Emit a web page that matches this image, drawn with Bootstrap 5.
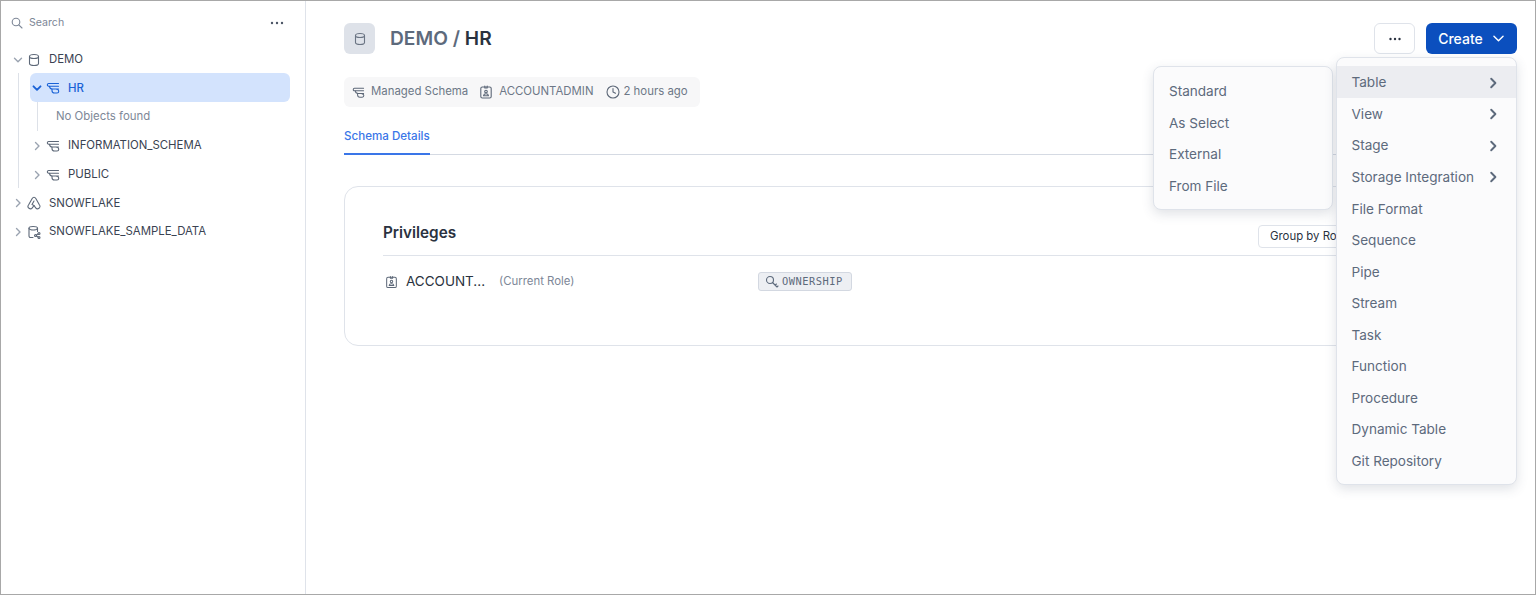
<!DOCTYPE html>
<html lang="en">
<head>
    <meta charset="UTF-8">
    <meta name="viewport" content="width=device-width, initial-scale=1.0">
    <title>DEMO / HR</title>
    <link href="https://cdn.jsdelivr.net/npm/bootstrap@5.3.0/dist/css/bootstrap.min.css" rel="stylesheet">
    <style>
        html, body { height: 100%; }
        body { font-family: Inter, "Liberation Sans", sans-serif; font-size: 13px; color: #2a3240; background: #fff; overflow: hidden; }
        .app-frame { height: 595px; border: 1px solid #a8a8a8; position: relative; }
        svg { display: block; flex: none; fill: none; stroke: currentColor; stroke-width: 1.1; stroke-linecap: round; stroke-linejoin: round; }

        /* sidebar */
        .side-search { height: 43.3px; padding: 0 21px 0 10px; color: #7d8797; font-size: 10.6px; }
        .side-search .find-icon { margin-right: 6px; }
        .side-pane { width: 305px; flex: none; border-right: 1px solid #dfe3ea; }
        .dots-icon { color: #4c5666; }
        .tree-row { height: 28.67px; padding: 2px 0 0 12px; font-size: 11.4px; color: #3a4352; white-space: nowrap; }
        .tree-row .chev { color: #9aa3b0; margin-right: 4px; stroke-width: 1.4; }
        .tree-row .node-icon { color: #5d6878; }
        .tree-label { margin-left: 8px; }
        .tree-nest { margin-left: 17px; border-left: 1px solid #dde1e8; padding-left: 11px; width: 272px; }
        .tree-nest .tree-row { padding-left: 2px; }
        .tree-nest .tree-row.is-active { background: #d3e3fd; color: #1a62d6; border-radius: 6px; font-weight: 500; }
        .tree-row.is-active .node-icon { color: #1a62d6; }
        .tree-row.is-active .chev { color: #1a62d6; stroke-width: 1.9; }
        .tree-nest-inner { margin-left: 7px; border-left: 1px solid #dde1e8; padding-left: 18px; color: #7d8797; height: 29px; font-size: 11.4px; }

        /* main */
        .main-pane { padding: 22px 18px 0 38px; min-width: 0; }
        .head-icon { width: 31px; height: 31px; background: #dee2e9; border-radius: 6px; color: #6a7483; }
        .page-title { font-size: 19.2px; font-weight: 600; margin: 0 0 0 15px; color: #5d6a7c; line-height: 31px; }
        .page-title b { color: #2a3240; font-weight: 600; }
        .more-btn { width: 41px; height: 31px; padding: 0; border: 1px solid #dfe3ea; border-radius: 6px; background: #fff; color: #2a3240; margin-right: 11px; }
        .create-btn { width: 91px; height: 31px; padding: 0; border: 0; border-radius: 6px; background: #0b4fbe; color: #fff; font-size: 14px; font-weight: 500; gap: 9px; }
        .create-btn:hover { background: #0b4fbe; color: #fff; }
        .meta-chip { width: 356px; height: 30px; margin-top: 23px; background: #f7f7f8; border-radius: 6px; padding: 0 8px; font-size: 11.4px; color: #6d7787; white-space: nowrap; }
        .meta-chip svg { color: #5d6878; }
        .meta-name { margin-left: 6px; }
        .meta-role { margin-left: 11px; }
        .meta-clock { margin-left: 13px; margin-right: 3px; }
        .tab-bar { margin-top: 13px; border-bottom: 1px solid #d5dae3; height: 35px; }
        .tab-active { color: #3a76e8; font-size: 11.6px; font-weight: 500; padding: 0; height: 35px; border-bottom: 2px solid #3a76e8; line-height: 33px; width: 86px; white-space: nowrap; }
        .priv-box { margin-top: 31px; height: 160px; border: 1px solid #dfe3ea; border-radius: 14px; padding: 37px 38px 0; }
        .priv-head { height: 32px; border-bottom: 1px solid #dfe3ea; }
        .priv-title { font-size: 15.3px; font-weight: 600; margin: 0; color: #2a3240; }
        .group-btn { height: 23px; width: 112px; padding: 0 0 0 11px; font-size: 11.4px; color: #2a3240; border: 1px solid #dfe3ea; border-radius: 4px; background: #fff; margin-right: 108px; text-align: left; white-space: nowrap; overflow: hidden; margin-top: 1px; }
        .priv-row { height: 50px; padding: 1px 0 0 2px; }
        .priv-row > svg { color: #5d6878; }
        .role-name { width: 80px; margin-left: 8px; font-size: 13.5px; color: #2a3240; white-space: nowrap; }
        .role-note { width: 259px; margin-left: 13px; font-size: 11.4px; color: #7d8797; }
        .own-tag { height: 19px; width: 94px; background: #edeff3; border: 1px solid #d3d8e1; border-radius: 3px; font-family: "DejaVu Sans Mono", monospace; font-size: 10.4px; letter-spacing: .5px; color: #5d6a7c; padding-left: 6px; gap: 3px; white-space: nowrap; }

        /* menus */
        .menu-panel { position: absolute; display: block; background: #fbfbfc; border: 1px solid #dfe3ea; border-radius: 8px; box-shadow: 0 4px 12px rgba(60, 72, 100, .16); padding: 8px 0; font-size: 13.55px; min-width: 0; }
        .menu-create { left: 1334.5px; top: 56px; width: 181px; height: 428px; }
        .menu-table { left: 1152px; top: 65.4px; width: 180px; height: 144px; }
        .menu-panel .dropdown-item { height: 31.55px; padding: 0 15px; color: #5d6a7c; display: flex; align-items: center; justify-content: space-between; }
        .menu-create .dropdown-item { padding-top: 1.5px; }
        .menu-panel .dropdown-item.is-open { background: #ecedf1; }
        .menu-panel .dropdown-item svg { color: #5d6a7c; stroke-width: 1.6; margin-right: 2px; }
    </style>
</head>
<body>
    <svg width="0" height="0" class="position-absolute">
        <defs>
            <symbol id="i-db" viewBox="0 0 14 14"><path d="M2.500 3.500C2.500 2.200 4.400 1.500 7 1.500s4.500.7 4.500 2v7c0 1.300-1.900 2-4.500 2s-4.500-.7-4.500-2z"/><path d="M2.500 3.500c0 1.300 1.900 2 4.500 2s4.500-.7 4.500-2"/></symbol>
            <symbol id="i-schema" viewBox="0 0 14 14"><path d="M12.500 2.500H2.800a1.300 1.300 0 0 0-.2 2.700h9.900"/><path d="M3.500 5.300c.3 2 1.200 2.700 3 2.700h6"/><path d="M6 8.200v1.200c0 1.500 1 2.600 2.500 2.600h2.500a1.500 1.500 0 0 0 0-3.500"/></symbol>
            <symbol id="i-role" viewBox="0 0 14 14"><rect x="1.800" y="2" width="10.400" height="11" rx="1.500"/><path d="M5.800 1v2h2.400V1"/><circle cx="7" cy="6.500" r="1.300"/><path d="M4.500 10.800c.2-1.500 1.200-2 2.500-2s2.300.5 2.500 2z"/></symbol>
            <symbol id="i-clock" viewBox="0 0 14 14"><circle cx="7" cy="7" r="6"/><path d="M7 3.500V7l2.500 1.200"/></symbol>
            <symbol id="i-search" viewBox="0 0 12 12"><circle cx="5" cy="5" r="3.800"/><path d="M7.800 7.800 11 11"/></symbol>
            <symbol id="i-right" viewBox="0 0 10 10"><path d="M3.500 1.500 7 5 3.500 8.500"/></symbol>
            <symbol id="i-down" viewBox="0 0 10 10"><path d="M1.500 3.300 5 6.800l3.500-3.500"/></symbol>
            <symbol id="i-share" viewBox="0 0 14 14"><path d="M7 1.200C6 1.200 5.600 1.800 5.200 2.500L1.500 9a2.300 2.300 0 0 0 3.800 2.800L7 9.500l1.700 2.300A2.300 2.300 0 0 0 12.500 9L8.800 2.500C8.400 1.800 8 1.200 7 1.200z"/><path d="M7 5 5 8.500 7 9.500"/></symbol>
            <symbol id="i-dbshare" viewBox="0 0 14 14"><path d="M6 12.500H3.500a1.500 1.500 0 0 1-1.500-1.500V3c0-1 1.500-1.500 4-1.500s4.500.5 4.500 1.500v3.500"/><path d="M2 3.500c.5 1 2 1.500 4.200 1.500s3.800-.5 4.300-1.500"/><circle cx="12" cy="8.500" r="1"/><circle cx="8.500" cy="10.500" r="1"/><circle cx="12" cy="12.500" r="1"/><path d="M9.500 10l1.500-1M9.500 11l1.500 1"/></symbol>
            <symbol id="i-key" viewBox="0 0 14 14"><circle cx="5" cy="5" r="3.500"/><path d="M7.500 7.500 12 12M10 10l1.500-1M12 12l1-1"/></symbol>
        </defs>
    </svg>

    <div class="app-frame d-flex">
        <aside class="side-pane">
            <div class="side-search d-flex align-items-center">
                <svg width="12" height="12" class="find-icon"><use href="#i-search"/></svg>
                <span>Search</span>
                <svg width="14" height="4" viewBox="0 0 14 4" class="dots-icon ms-auto"><circle cx="2" cy="2" r="1.200" fill="currentColor" stroke="none"/><circle cx="7" cy="2" r="1.200" fill="currentColor" stroke="none"/><circle cx="12" cy="2" r="1.200" fill="currentColor" stroke="none"/></svg>
            </div>
            <div class="tree-row d-flex align-items-center">
                <svg width="10" height="10" class="chev"><use href="#i-down"/></svg>
                <svg width="14" height="14" class="node-icon"><use href="#i-db"/></svg>
                <span class="tree-label">DEMO</span>
            </div>
            <div class="tree-nest">
                <div class="tree-row is-active d-flex align-items-center">
                    <svg width="10" height="10" class="chev"><use href="#i-down"/></svg>
                    <svg width="14" height="14" class="node-icon"><use href="#i-schema"/></svg>
                    <span class="tree-label">HR</span>
                </div>
                <div class="tree-nest-inner d-flex align-items-center">No Objects found</div>
                <div class="tree-row d-flex align-items-center">
                    <svg width="10" height="10" class="chev"><use href="#i-right"/></svg>
                    <svg width="14" height="14" class="node-icon"><use href="#i-schema"/></svg>
                    <span class="tree-label">INFORMATION_SCHEMA</span>
                </div>
                <div class="tree-row d-flex align-items-center">
                    <svg width="10" height="10" class="chev"><use href="#i-right"/></svg>
                    <svg width="14" height="14" class="node-icon"><use href="#i-schema"/></svg>
                    <span class="tree-label">PUBLIC</span>
                </div>
            </div>
            <div class="tree-row d-flex align-items-center">
                <svg width="10" height="10" class="chev"><use href="#i-right"/></svg>
                <svg width="14" height="14" class="node-icon"><use href="#i-share"/></svg>
                <span class="tree-label">SNOWFLAKE</span>
            </div>
            <div class="tree-row d-flex align-items-center">
                <svg width="10" height="10" class="chev"><use href="#i-right"/></svg>
                <svg width="14" height="14" class="node-icon"><use href="#i-dbshare"/></svg>
                <span class="tree-label">SNOWFLAKE_SAMPLE_DATA</span>
            </div>
        </aside>

        <main class="main-pane flex-grow-1">
            <div class="d-flex align-items-center">
                <div class="head-icon d-flex align-items-center justify-content-center">
                    <svg width="14" height="14"><use href="#i-db"/></svg>
                </div>
                <h1 class="page-title">DEMO / <b>HR</b></h1>
                <button type="button" class="btn more-btn ms-auto d-flex align-items-center justify-content-center">
                    <svg width="14" height="4" viewBox="0 0 14 4"><circle cx="2.500" cy="2" r="1.200" fill="currentColor" stroke="none"/><circle cx="7" cy="2" r="1.200" fill="currentColor" stroke="none"/><circle cx="11.500" cy="2" r="1.200" fill="currentColor" stroke="none"/></svg>
                </button>
                <button type="button" class="btn create-btn d-flex align-items-center justify-content-center">
                    Create
                    <svg width="13" height="13"><use href="#i-down"/></svg>
                </button>
            </div>

            <div class="meta-chip d-flex align-items-center">
                <svg width="13" height="13"><use href="#i-schema"/></svg>
                <span class="meta-name">Managed Schema</span>
                <svg width="14" height="14" class="meta-role"><use href="#i-role"/></svg>
                <span class="meta-name">ACCOUNTADMIN</span>
                <svg width="14" height="14" class="meta-clock"><use href="#i-clock"/></svg>
                <span>2 hours ago</span>
            </div>

            <div class="tab-bar">
                <div class="tab-active">Schema Details</div>
            </div>

            <section class="priv-box">
                <div class="priv-head d-flex align-items-start justify-content-between">
                    <h2 class="priv-title">Privileges</h2>
                    <button type="button" class="btn group-btn">Group by Role</button>
                </div>
                <div class="priv-row d-flex align-items-center">
                    <svg width="13" height="14"><use href="#i-role"/></svg>
                    <span class="role-name">ACCOUNT...</span>
                    <span class="role-note">(Current Role)</span>
                    <span class="own-tag d-inline-flex align-items-center">
                        <svg width="14" height="14"><use href="#i-key"/></svg>
                        OWNERSHIP
                    </span>
                </div>
            </section>
        </main>

        <div class="dropdown-menu menu-panel menu-table">
            <a class="dropdown-item" href="#">Standard</a>
            <a class="dropdown-item" href="#">As Select</a>
            <a class="dropdown-item" href="#">External</a>
            <a class="dropdown-item" href="#">From File</a>
        </div>
        <div class="dropdown-menu menu-panel menu-create">
            <a class="dropdown-item is-open" href="#">Table <svg width="12" height="12"><use href="#i-right"/></svg></a>
            <a class="dropdown-item" href="#">View <svg width="12" height="12"><use href="#i-right"/></svg></a>
            <a class="dropdown-item" href="#">Stage <svg width="12" height="12"><use href="#i-right"/></svg></a>
            <a class="dropdown-item" href="#">Storage Integration <svg width="12" height="12"><use href="#i-right"/></svg></a>
            <a class="dropdown-item" href="#">File Format</a>
            <a class="dropdown-item" href="#">Sequence</a>
            <a class="dropdown-item" href="#">Pipe</a>
            <a class="dropdown-item" href="#">Stream</a>
            <a class="dropdown-item" href="#">Task</a>
            <a class="dropdown-item" href="#">Function</a>
            <a class="dropdown-item" href="#">Procedure</a>
            <a class="dropdown-item" href="#">Dynamic Table</a>
            <a class="dropdown-item" href="#">Git Repository</a>
        </div>
    </div>

    <script src="https://cdn.jsdelivr.net/npm/bootstrap@5.3.0/dist/js/bootstrap.bundle.min.js"></script>
</body>
</html>
